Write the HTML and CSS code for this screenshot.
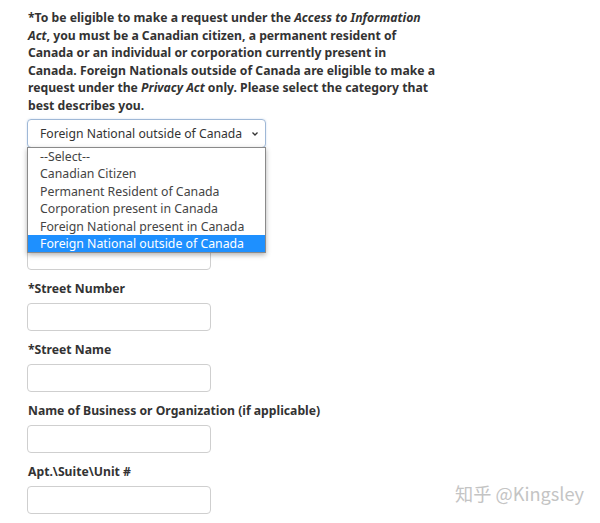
FILE: index.html
```html
<!DOCTYPE html>
<html lang="en">
<head>
<meta charset="utf-8">
<link rel="stylesheet" href="styles.css">
</head>
<body>
<main class="form">
  <p class="intro">*To be eligible to make a request under the <em>Access to Information</em><br><em>Act</em>, you must be a Canadian citizen, a permanent resident of<br>Canada or an individual or corporation currently present in<br>Canada. Foreign Nationals outside of Canada are eligible to make a<br>request under the <em>Privacy Act</em> only. Please select the category that<br>best describes you.</p>
  <div class="select-wrap">
    <div class="select">
      <span>Foreign National outside of Canada</span>
      <svg class="chev" width="8" height="6" viewBox="0 0 8 6"><path d="M1.5 1.5 L4 4 L6.5 1.5" fill="none" stroke="#333" stroke-width="1.3"/></svg>
    </div>
    <ul class="options">
      <li>--Select--</li>
      <li>Canadian Citizen</li>
      <li>Permanent Resident of Canada</li>
      <li>Corporation present in Canada</li>
      <li>Foreign National present in Canada</li>
      <li class="active">Foreign National outside of Canada</li>
    </ul>
  </div>
  <div class="field covered">
    <div class="input"></div>
  </div>
  <div class="field">
    <label class="label">*Street Number</label>
    <div class="input"></div>
  </div>
  <div class="field">
    <label class="label">*Street Name</label>
    <div class="input"></div>
  </div>
  <div class="field">
    <label class="label">Name of Business or Organization (if applicable)</label>
    <div class="input"></div>
  </div>
  <div class="field">
    <label class="label">Apt.\Suite\Unit #</label>
    <div class="input"></div>
  </div>
</main>
<div class="watermark">知乎 @Kingsley</div>
</body>
</html>
```

FILE: styles.css
```css
html, body {
  margin: 0;
  padding: 0;
  background: #fff;
}
body {
  width: 600px;
  height: 523px;
  overflow: hidden;
  position: relative;
  font-family: "Noto Sans", "Open Sans", sans-serif;
  color: #333;
}
.form {
  padding: 9px 0 0 27px;
}
.intro {
  margin: 0 0 5px 1px;
  width: 440px;
  white-space: nowrap;
  font-size: 12.2px;
  line-height: 17.5px;
  font-weight: 700;
}
.intro em {
  font-style: italic;
}
.select-wrap {
  position: relative;
}
.select {
  box-sizing: border-box;
  width: 239px;
  height: 29px;
  border: 1px solid #9fb8d6;
  border-radius: 4px;
  display: flex;
  align-items: center;
  justify-content: space-between;
  padding: 0 6px 0 12px;
  font-size: 12.2px;
  box-shadow: 0 0 2px rgba(100, 150, 210, 0.35);
}
.chev {
  display: block;
}
.options {
  position: absolute;
  left: 0;
  top: 28px;
  margin: 0;
  padding: 0;
  list-style: none;
  box-sizing: border-box;
  width: 239px;
  border: 1px solid #8a8a8a;
  background: #fff;
  box-shadow: 0 2px 5px rgba(0, 0, 0, 0.3);
  z-index: 2;
  font-size: 12.3px;
}
.options li {
  height: 17.4px;
  line-height: 17.4px;
  padding-left: 12px;
  color: #444;
  white-space: nowrap;
}
.options li.active {
  background: #1e90ff;
  color: #fff;
}
.field {
  margin-top: 10px;
}
.field.covered {
  margin-top: 94px;
}
.label {
  display: block;
  font-size: 12.2px;
  line-height: 18px;
  font-weight: 700;
  margin: 0 0 5px 1px;
}
.input {
  box-sizing: border-box;
  width: 184px;
  height: 28px;
  border: 1px solid #cfcfcf;
  border-radius: 4px;
}
.watermark {
  position: absolute;
  left: 455px;
  top: 480px;
  font-family: "Noto Sans CJK SC", "Noto Sans", sans-serif;
  font-size: 18.2px;
  color: #c4c4c4;
  text-shadow: 0 1px 1px rgba(255,255,255,0.9);
}
```
